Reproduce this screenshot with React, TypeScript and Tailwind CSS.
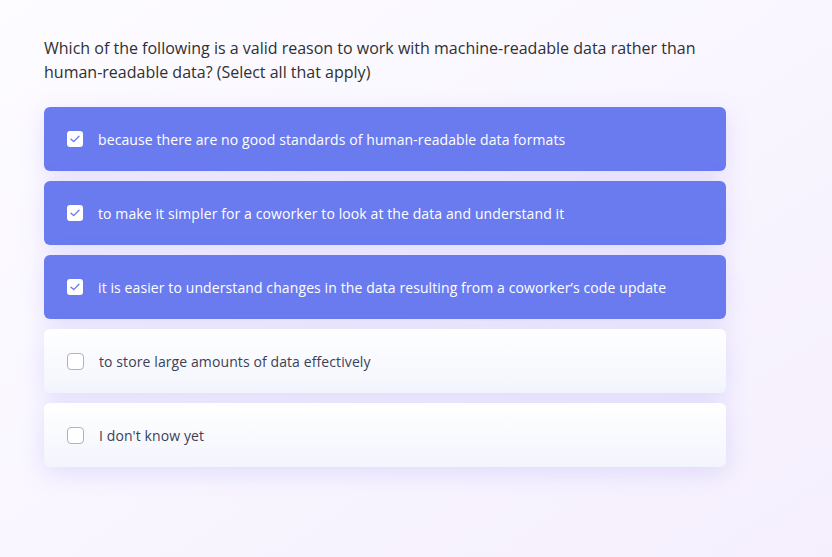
import React from "react";

const options = [
  { text: "because there are no good standards of human-readable data formats", checked: true },
  { text: "to make it simpler for a coworker to look at the data and understand it", checked: true },
  { text: "it is easier to understand changes in the data resulting from a coworker\u2019s code update", checked: true },
  { text: "to store large amounts of data effectively", checked: false },
  { text: "I don't know yet", checked: false },
];

function Check() {
  return (
    <svg width="10" height="8" viewBox="0 0 10 8" fill="none">
      <path d="M1 4.2 L3.7 6.6 L9 1.2" stroke="#6a78ee" strokeWidth="1.3" strokeLinecap="round" strokeLinejoin="round" />
    </svg>
  );
}

export default function App() {
  return (
    <div
      className="w-[832px] h-[557px] overflow-hidden bg-gradient-to-br from-[#fdfcff] via-[#f9f6ff] to-[#f5effd] pl-[44px] pt-[36px]"
      style={{ fontFamily: "'Open Sans', 'Noto Sans', sans-serif" }}
    >
      <p className="w-[682px] text-[16px] leading-[24px] text-[#2f3033]">
        Which of the following is a valid reason to work with machine-readable data rather than human-readable data? (Select all that apply)
      </p>
      <div className="mt-[23px] w-[682px] flex flex-col gap-[10px]">
        {options.map((o, i) => (
          <div
            key={i}
            className={
              "h-[64px] rounded-[6px] flex items-center pl-[23px] shadow-[0_6px_24px_rgba(120,105,240,0.18)] " +
              (o.checked
                ? "bg-[#6a7bf0] text-white"
                : "bg-gradient-to-b from-[#ffffff] to-[#f3f5fd] text-[#3c3f58]")
            }
          >
            {o.checked ? (
              <div className="w-[16px] h-[16px] rounded-[3px] bg-white flex items-center justify-center">
                <Check />
              </div>
            ) : (
              <div className="w-[17px] h-[17px] rounded-[4px] border border-[#aab4c2] bg-white" />
            )}
            <span className="ml-[15px] text-[14px] font-medium tracking-[0.1px]">{o.text}</span>
          </div>
        ))}
      </div>
    </div>
  );
}
